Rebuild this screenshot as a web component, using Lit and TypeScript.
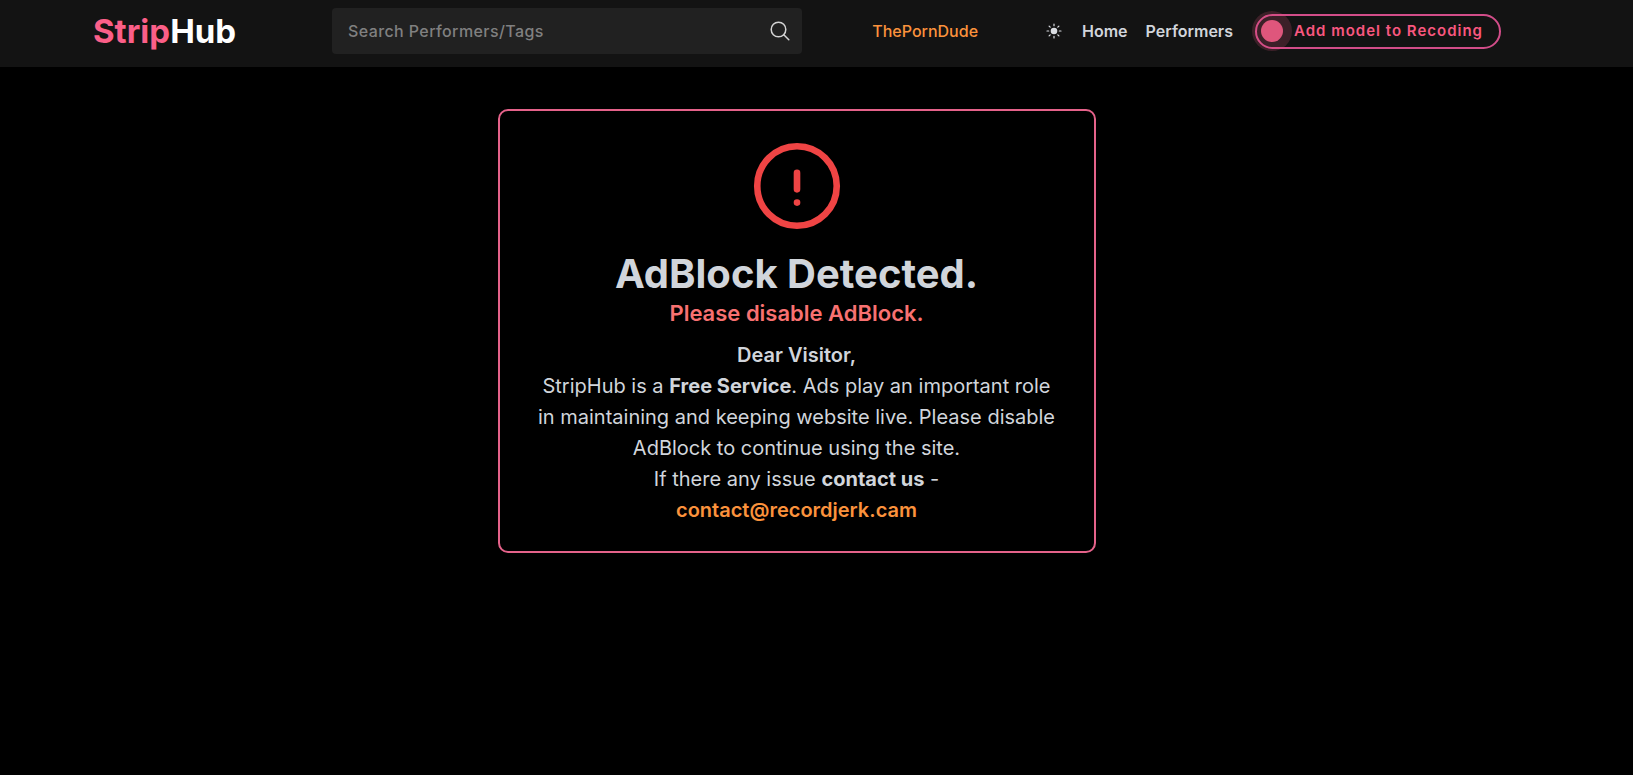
import { LitElement, html, css } from "lit";
import { customElement } from "lit/decorators.js";

@customElement("app-root")
export class AppRoot extends LitElement {
  static styles = css`
    * { box-sizing: border-box; }
    :host {
      display: block;
      min-height: 100vh;
      background: #000;
      color: #d1d5db;
      font: 500 16px/24px Inter, sans-serif;
    }
    a { color: inherit; text-decoration: none; }
    button { cursor: pointer; }
    header { background: #131313; padding: 8px 132px 13px 93px; display: flex; align-items: center; }
    .brand { width: 239px; font-size: 33px; line-height: 46px; font-weight: 700; color: #fff; }
    .brand span { color: #fb5f88; }
    .search { display: flex; flex: 0 1 470px; height: 46px; border-radius: 4px; background: #212121; align-items: center; }
    .search input { flex: 1; min-width: 0; border: 0; outline: 0; background: none; padding: 0 16px; color: #d1d5db; font: inherit; letter-spacing: 0.025em; }
    .search input::placeholder { color: #808080; opacity: 1; }
    .search button { border: 0; background: none; padding: 0; width: 44px; height: 46px; display: grid; place-items: center; color: #d4d4d4; }
    nav { margin-left: auto; display: flex; align-items: center; gap: 18px; }
    .partner { color: #fb923c; margin-right: 48px; }
    .theme { border: 0; background: none; padding: 0; display: grid; place-items: center; width: 20px; color: #d9dce1; }
    .link { font-weight: 600; }
    .record { display: flex; align-items: center; height: 35px; border: 2px solid #d24d89; border-radius: 18px; background: none; color: #f9577f; padding: 0 16px 0 4px; font: inherit; font-size: 15px; font-weight: 600; letter-spacing: 1px; margin-left: 4px; white-space: nowrap; }
    .dot { width: 22px; height: 22px; border-radius: 50%; background: #df567c; box-shadow: 0 0 0 9px rgba(223, 86, 124, 0.2); margin-right: 11px; }
    main { padding: 42px 56px 42px 16px; display: flex; justify-content: center; }
    .card { width: 100%; max-width: 598px; border: 2px solid #e5628a; border-radius: 10px; padding: 22px 36px 25px; text-align: center; font-size: 20px; line-height: 31px; font-weight: 400; }
    .alert { display: block; margin: 0 auto 11px; }
    h1 { margin: 0; font-size: 40px; line-height: 48px; font-weight: 700; }
    h2 { margin: 0 0 12px; font-size: 22px; line-height: 30px; font-weight: 600; color: #f87171; }
    p { margin: 0; }
    b { font-weight: 700; }
    .greeting, .mail { font-weight: 600; }
    .mail { color: #fb923c; }
  `;

  render() {
    return html`
      <header>
        <a class="brand" href="#"><span>Strip</span>Hub</a>
        <form class="search">
          <input type="search" aria-label="Search Performers/Tags" placeholder="Search Performers/Tags" />
          <button type="button" aria-label="Search">
            <svg width="20" height="20" viewBox="0 0 20 20" fill="none" stroke="currentColor" stroke-width="1.5" stroke-linecap="round"><circle cx="8.5" cy="8.5" r="7.3" /><path d="m13.8 13.8 5 5" /></svg>
          </button>
        </form>
        <nav>
          <a class="partner" href="#">ThePornDude</a>
          <button class="theme" aria-label="Toggle theme">
            <svg width="16" height="16" viewBox="0 0 16 16">
              <circle cx="8" cy="8" r="3.3" fill="currentColor" />
              <path d="M8 1v1.7M8 13.3V15M1 8h1.7M13.3 8H15M3.1 3.1l1.1 1.1M11.8 11.8l1.1 1.1M3.1 12.9l1.1-1.1M11.8 4.2l1.1-1.1" fill="none" stroke="currentColor" stroke-width="1.2" stroke-linecap="round" />
            </svg>
          </button>
          <a class="link" href="#">Home</a>
          <a class="link" href="#">Performers</a>
          <button class="record"><span class="dot"></span>Add model to Recoding</button>
        </nav>
      </header>
      <main>
        <section class="card">
          <svg class="alert" width="106" height="106" viewBox="0 0 24 24" fill="none" stroke="#ef4444" stroke-width="1.5" stroke-linecap="round"><circle cx="12" cy="12" r="9" /><path d="M12 9v3.75M12 15.75h.008" /></svg>
          <h1>AdBlock Detected.</h1>
          <h2>Please disable AdBlock.</h2>
          <p class="greeting">Dear Visitor,</p>
          <p>StripHub is a <b>Free Service</b>. Ads play an important role in maintaining and keeping website live. Please disable AdBlock to continue using the site.</p>
          <p>If there any issue <b>contact us</b> -</p>
          <a class="mail" href="#">contact@recordjerk.cam</a>
        </section>
      </main>`;
  }
}
